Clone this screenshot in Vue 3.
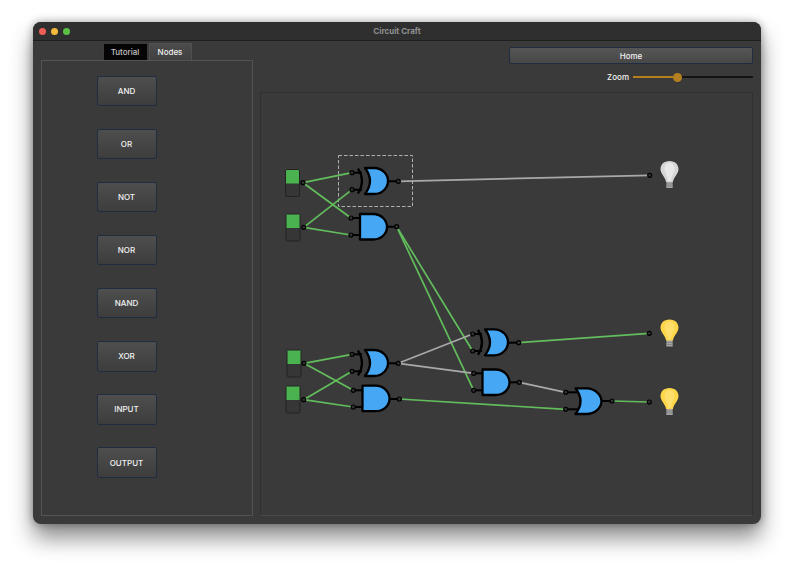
<template>
  <div class="page">
    <div class="window">
      <div class="titlebar">
        <div class="lights">
          <span class="light red"></span>
          <span class="light yellow"></span>
          <span class="light green"></span>
        </div>
        <span class="title">Circuit Craft</span>
      </div>
      <div class="content">
        <div class="left">
          <div class="tabs">
            <div class="tab active">Tutorial</div>
            <div class="tab">Nodes</div>
          </div>
          <div class="panel">
            <button v-for="n in nodeTypes" :key="n" class="node-btn">{{ n }}</button>
          </div>
        </div>
        <div class="right">
          <button class="home-btn">Home</button>
          <div class="zoom-row">
            <span class="zoom-label">Zoom</span>
            <div class="slider">
              <div class="slider-fill"></div>
              <div class="slider-thumb"></div>
              <div class="slider-rest"></div>
            </div>
          </div>
          <div class="canvas">
            <svg class="board" width="491" height="422" viewBox="261 93 491 422">
              <rect x="338.5" y="155.5" width="74" height="51" fill="none" stroke="#b0b0b0" stroke-width="1" stroke-dasharray="3.5 2" />

              <line v-for="(w, i) in wires" :key="'w' + i" :x1="w[0]" :y1="w[1]" :x2="w[2]" :y2="w[3]"
                :stroke="w[4] ? '#62bd5c' : '#a9a9a9'" stroke-width="1.7" />

              <g v-for="s in switches" :key="'s' + s.y">
                <rect :x="s.x" :y="s.y" width="14" height="27" rx="1.5" fill="#363636" />
                <rect :x="s.x" :y="s.y" width="14" height="14" fill="#4ab34f" />
                <rect :x="s.x" :y="s.y" width="14" height="27" rx="1.5" fill="none" stroke="#232323" stroke-width="1" />
              </g>

              <g v-for="(g, i) in gates" :key="'g' + i">
                <line v-for="(p, j) in g.inputs" :key="j" :x1="p[0]" :y1="p[1]" :x2="g.x + g.inset" :y2="p[1]" stroke="#000" stroke-width="2" />
                <line :x1="g.x + g.width" :y1="g.out[1]" :x2="g.out[0]" :y2="g.out[1]" stroke="#000" stroke-width="2" />
                <path v-if="g.kind === 'xor'" :transform="`translate(${g.x} ${g.y})`" d="M-7 0.5 Q1 13 -7 25.5" fill="none" stroke="#000" stroke-width="2.3" />
                <path :transform="`translate(${g.x} ${g.y})`" :d="shapes[g.kind]" fill="#46a8f5" stroke="#000" stroke-width="2.3" stroke-linejoin="round" />
              </g>

              <circle v-for="(p, i) in pins" :key="'p' + i" :cx="p[0]" :cy="p[1]" r="2" fill="#333" stroke="#000" stroke-width="1.2" />

              <g v-for="b in bulbs" :key="'b' + b.y" :transform="`translate(669.5 ${b.y})`">
                <path d="M-3 19 L-3.2 27 H3.2 L3 19 Z" fill="#a5a5a5" />
                <path d="M-3.2 23 H3.2 M-3.2 25 H3.2" stroke="#7c7c7c" stroke-width="0.8" />
                <path d="M0 0 C5.5 0 9 3.6 9 8 C9 12.5 4.5 15.5 3.4 21 H-3.4 C-4.5 15.5 -9 12.5 -9 8 C-9 3.6 -5.5 0 0 0 Z" :fill="b.on ? '#fdd649' : '#d6d6d6'" />
                <path d="M0 2 C3 2 5 4.5 5 8 C5 11 2 14 1.5 20 H-1.5 C-2 14 -5 11 -5 8 C-5 4.5 -3 2 0 2 Z" :fill="b.on ? '#fee27a' : '#efefef'" opacity="0.7" />
              </g>
            </svg>
          </div>
        </div>
      </div>
    </div>
  </div>
</template>

<script setup>
const nodeTypes = ['AND', 'OR', 'NOT', 'NOR', 'NAND', 'XOR', 'INPUT', 'OUTPUT'];

const shapes = {
  and: 'M0 0 H13 C22 0 27 7 27 13 C27 19 22 25.5 13 25.5 H0 Z',
  xor: 'M0 0 H9 C18 0 23 7 23 13 C23 19 18 26 9 26 H0 Q10 13 0 0 Z',
  or: 'M0 0 H11 C20 0 26 7 26 13 C26 19 20 25.7 11 25.7 H0 Q10 13 0 0 Z',
};

const gates = [
  { kind: 'xor', x: 365, y: 168, width: 23, inset: -3, inputs: [[352, 172.7], [352, 189.7]], out: [398.3, 181.3] },
  { kind: 'and', x: 360, y: 214, width: 27, inset: 0, inputs: [[351, 218], [351, 235]], out: [396.7, 226.7] },
  { kind: 'xor', x: 365, y: 350, width: 23, inset: -3, inputs: [[352, 354.3], [352, 371.3]], out: [398.3, 363.3] },
  { kind: 'and', x: 362.5, y: 385.7, width: 27, inset: 0, inputs: [[353.3, 390.3], [353.3, 407]], out: [399.3, 399] },
  { kind: 'xor', x: 485, y: 329.3, width: 23, inset: -3, inputs: [[472.7, 334], [472.7, 351]], out: [518.7, 342.7] },
  { kind: 'and', x: 482.5, y: 369.5, width: 27, inset: 0, inputs: [[473.7, 373.3], [473.7, 390.3]], out: [519.3, 382.3] },
  { kind: 'or', x: 575.5, y: 388.3, width: 26, inset: 3, inputs: [[565.7, 392.3], [565.7, 409.3]], out: [612, 401] },
];

const switches = [
  { x: 285.5, y: 169.5 },
  { x: 286, y: 214 },
  { x: 287, y: 350 },
  { x: 286, y: 386 },
];

const sw = [[303, 182.7], [303.7, 227.3], [304, 363.3], [303.7, 399.7]];
const outs = [[649.7, 175.3], [649.3, 333.3], [649.3, 402]];

// x1 y1 x2 y2 live
const wires = [
  [398.3, 181.3, 649.7, 175.3, false],
  [...sw[0], 352, 172.7, true],
  [...sw[0], 351, 218, true],
  [...sw[1], 352, 189.7, true],
  [...sw[1], 351, 235, true],
  [396.7, 226.7, 472.7, 351, true],
  [396.7, 226.7, 473.7, 390.3, true],
  [...sw[2], 352, 354.3, true],
  [...sw[2], 353.3, 390.3, true],
  [...sw[3], 352, 371.3, true],
  [...sw[3], 353.3, 407, true],
  [398.3, 363.3, 472.7, 334, false],
  [398.3, 363.3, 473.7, 373.3, false],
  [399.3, 399, 565.7, 409.3, true],
  [519.3, 382.3, 565.7, 392.3, false],
  [518.7, 342.7, 649.3, 333.3, true],
  [612, 401, 649.3, 402, true],
];

const pins = [...sw, ...outs, ...gates.flatMap((g) => [...g.inputs, g.out])];

const bulbs = [
  { y: 161, on: false },
  { y: 319.5, on: true },
  { y: 388, on: true },
];
</script>

<style scoped>
.page {
  width: 794px;
  height: 568px;
  box-sizing: border-box;
  padding: 22px 33px 44px;
  overflow: hidden;
  font-family: Inter, "Liberation Sans", sans-serif;
}

.window {
  height: 502px;
  border-radius: 8px;
  background: #3a3a3a;
  display: flex;
  flex-direction: column;
  box-shadow: 0 14px 22px rgba(0, 0, 0, 0.45), 0 0 8px rgba(0, 0, 0, 0.35);
  overflow: hidden;
}

.titlebar {
  height: 19px;
  flex: none;
  box-sizing: border-box;
  display: flex;
  align-items: center;
  justify-content: center;
  position: relative;
  background: #2f2f2f;
  border-bottom: 1px solid #1f1f1f;
}

.lights {
  position: absolute;
  left: 6px;
  top: 6px;
  display: flex;
  gap: 5px;
}

.light {
  width: 7px;
  height: 7px;
  border-radius: 50%;
}

.red { background: #ed5f56; }
.yellow { background: #f5b93d; }
.green { background: #5ac144; }

.title {
  font-size: 8px;
  font-weight: 700;
  color: #8f8f8f;
}

.content {
  flex: 1;
  min-height: 0;
  display: flex;
  gap: 7px;
  padding: 2px 8px 8px;
}

.left {
  width: 212px;
  flex: none;
  display: flex;
  flex-direction: column;
}

.tabs {
  height: 17px;
  flex: none;
  display: flex;
  justify-content: center;
  gap: 1px;
}

.tab {
  width: 43px;
  display: flex;
  align-items: center;
  justify-content: center;
  font-size: 8px;
  font-weight: 500;
  color: #f0f0f0;
  background: linear-gradient(#4c4c4c, #404040);
  border: 1px solid #505050;
  border-bottom: none;
  box-sizing: border-box;
}

.tab.active {
  width: 45px;
  background: #050505;
  color: #c4c4c4;
  border-color: #3c3c3c;
}

.panel {
  flex: 1;
  min-height: 0;
  box-sizing: border-box;
  border: 1px solid #535353;
  padding: 14.5px 0 0 54.5px;
  display: flex;
  flex-direction: column;
  align-items: flex-start;
  gap: 22.74px;
}

.node-btn {
  width: 60px;
  height: 30.4px;
  flex: none;
  padding: 0;
  font-family: inherit;
  font-size: 8px;
  font-weight: 500;
  color: #f2f2f2;
  border: 1px solid #1f2d42;
  border-radius: 2px;
  background: linear-gradient(#4e4e4e, #3d3d3d);
}

.right {
  flex: 1;
  min-width: 0;
  display: flex;
  flex-direction: column;
}

.home-btn {
  width: 244px;
  height: 17px;
  flex: none;
  align-self: flex-end;
  margin-top: 4px;
  padding: 0;
  font-family: inherit;
  font-size: 8px;
  font-weight: 500;
  color: #f2f2f2;
  border: 1px solid #1f2d42;
  border-radius: 2px;
  background: linear-gradient(#565656, #474747);
}

.zoom-row {
  height: 14px;
  flex: none;
  margin-top: 6px;
  display: flex;
  align-items: center;
  justify-content: flex-end;
  gap: 4px;
}

.zoom-label {
  font-size: 8px;
  font-weight: 500;
  color: #f2f2f2;
}

.slider {
  width: 120px;
  display: flex;
  align-items: center;
}

.slider-fill {
  width: 40px;
  height: 2px;
  background: #b47f1e;
}

.slider-thumb {
  width: 9px;
  height: 9px;
  flex: none;
  border-radius: 50%;
  background: #b47f1e;
}

.slider-rest {
  flex: 1;
  height: 2px;
  background: #141414;
}

.canvas {
  flex: 1;
  min-height: 0;
  margin-top: 8px;
  box-sizing: border-box;
  border: 1px solid #303030;
  border-bottom-color: #484848;
}

.board {
  display: block;
}
</style>

<style>
html, body {
  background: #fff;
}
</style>
